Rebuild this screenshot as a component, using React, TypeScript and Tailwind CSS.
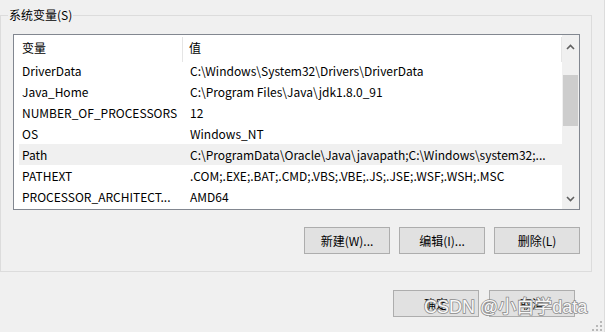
import React from "react";

const rows = [
  { name: "DriverData", value: "C:\\Windows\\System32\\Drivers\\DriverData" },
  { name: "Java_Home", value: "C:\\Program Files\\Java\\jdk1.8.0_91" },
  { name: "NUMBER_OF_PROCESSORS", value: "12" },
  { name: "OS", value: "Windows_NT" },
  {
    name: "Path",
    value: "C:\\ProgramData\\Oracle\\Java\\javapath;C:\\Windows\\system32;...",
    selected: true,
  },
  { name: "PATHEXT", value: ".COM;.EXE;.BAT;.CMD;.VBS;.VBE;.JS;.JSE;.WSF;.WSH;.MSC" },
  { name: "PROCESSOR_ARCHITECT...", value: "AMD64" },
];

const Button = ({ label }: { label: string }) => (
  <button className="w-[86px] h-[27px] bg-[#e1e1e1] border border-[#adadad] text-[12px] text-black flex items-center justify-center">
    {label}
  </button>
);

const Chevron = ({ up }: { up?: boolean }) => (
  <svg width="9" height="6" viewBox="0 0 9 6" className="text-[#606060]">
    <path
      d={up ? "M1 5 L4.5 1.5 L8 5" : "M1 1 L4.5 4.5 L8 1"}
      fill="none"
      stroke="currentColor"
      strokeWidth="1.6"
    />
  </svg>
);

export default function App() {
  return (
    <div className="w-[605px] h-[332px] bg-[#f0f0f0] relative overflow-hidden font-['Noto_Sans_CJK_SC',sans-serif] text-[12px] text-black border-r border-[#dcdcdc]">
      {/* 系统变量 group */}
      <div className="relative mt-[15px] w-[592px] h-[257px] border border-[#dcdcdc]">
        <span className="absolute left-[7px] -top-[9px] px-px bg-[#f0f0f0] leading-[16px]">
          系统变量(S)
        </span>

        <div className="ml-[12px] mt-[18px] w-[567px] h-[176px] border border-[#828790] bg-white flex">
          <div className="flex-1 flex flex-col">
            {/* header */}
            <div className="h-[25px] flex items-center relative">
              <div className="w-[169px] pl-[8px] h-full flex items-center border-r border-[#e5e5e5] mt-[3px]">
                <span className="-mt-[3px]">变量</span>
              </div>
              <div className="flex-1 pl-[6px] h-full flex items-center border-r border-[#e5e5e5] mt-[3px]">
                <span className="-mt-[3px]">值</span>
              </div>
            </div>
            {/* rows */}
            {rows.map((r) => (
              <div
                key={r.name}
                className={`ml-[5px] h-[21px] flex items-center whitespace-nowrap ${
                  r.selected ? "bg-[#f0f0f0]" : ""
                }`}
              >
                <div className="w-[164px] pl-[3px]">{r.name}</div>
                <div className="flex-1 pl-[7px] overflow-hidden">{r.value}</div>
              </div>
            ))}
          </div>
          {/* scrollbar */}
          <div className="w-[17px] bg-[#f0f0f0] flex flex-col items-center">
            <div className="h-[21px] w-full flex items-center justify-center mt-[1px]">
              <Chevron up />
            </div>
            <div className="mt-[18px] w-[15px] h-[51px] bg-[#cdcdcd]" />
            <div className="flex-1" />
            <div className="h-[21px] w-full flex items-center justify-center">
              <Chevron />
            </div>
          </div>
        </div>

        <div className="mt-[17px] ml-[303px] flex gap-[9px]">
          <Button label="新建(W)..." />
          <Button label="编辑(I)..." />
          <Button label="删除(L)" />
        </div>
      </div>

      <div className="mt-[18px] ml-[393px] flex gap-[10px]">
        <Button label="确定" />
        <Button label="取消" />
      </div>

      {/* watermark */}
      <div className="absolute left-[424px] top-[296px] text-[18px] leading-[22px] text-[#f8f8f8] font-['Liberation_Sans','Noto_Sans_CJK_SC',sans-serif] [-webkit-text-stroke:1.6px_#8c8c8c] [paint-order:stroke_fill] whitespace-nowrap">
        CSDN @小白学data
      </div>

      {/* resize grip */}
      <svg className="absolute right-[2px] bottom-[1px]" width="11" height="11" viewBox="0 0 11 11">
        {[
          [9, 1],
          [9, 5],
          [5, 5],
          [9, 9],
          [5, 9],
          [1, 9],
        ].map(([x, y], i) => (
          <rect key={i} x={x} y={y} width="2" height="2" fill="#b8b8b8" />
        ))}
      </svg>
    </div>
  );
}
